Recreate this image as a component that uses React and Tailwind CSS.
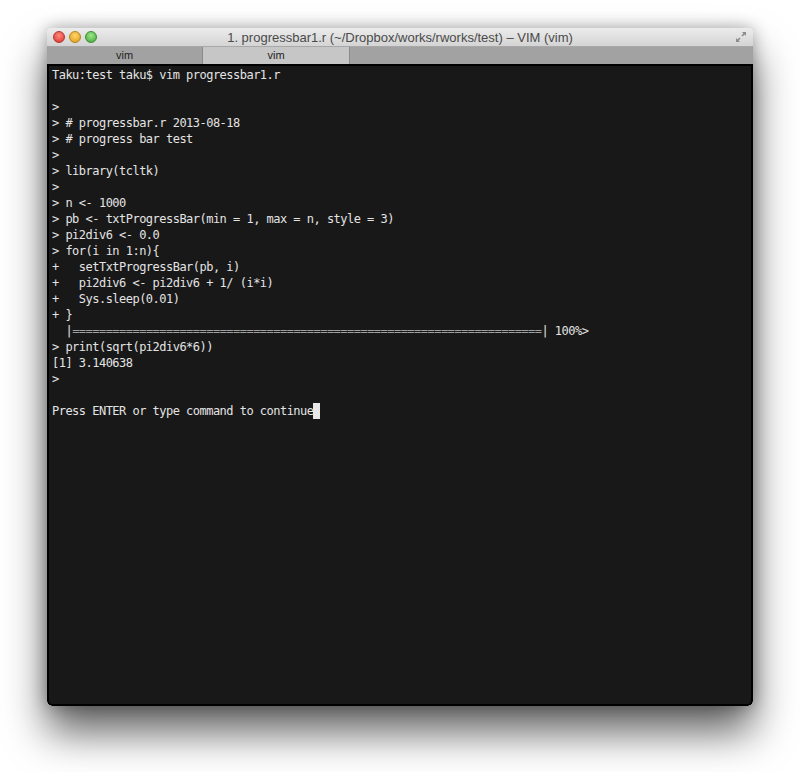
import React from "react";

const lines = [
  "Taku:test taku$ vim progressbar1.r",
  "",
  ">",
  "> # progressbar.r 2013-08-18",
  "> # progress bar test",
  ">",
  "> library(tcltk)",
  ">",
  "> n <- 1000",
  "> pb <- txtProgressBar(min = 1, max = n, style = 3)",
  "> pi2div6 <- 0.0",
  "> for(i in 1:n){",
  "+   setTxtProgressBar(pb, i)",
  "+   pi2div6 <- pi2div6 + 1/ (i*i)",
  "+   Sys.sleep(0.01)",
  "+ }",
];

const after = ["> print(sqrt(pi2div6*6))", "[1] 3.140638", ">", ""];

const TrafficLight = ({ from, to, ring }) => (
  <span
    className="w-[12px] h-[12px] rounded-full border"
    style={{ background: `radial-gradient(circle at 50% 35%, ${from}, ${to})`, borderColor: ring }}
  />
);

const App = () => {
  return (
    <div className="w-[800px] h-[772px] bg-white pt-[28px] pl-[47px] overflow-hidden">
      <div className="w-[706px] h-[678px] flex flex-col rounded-[5px] overflow-hidden shadow-[0_26px_42px_rgba(0,0,0,0.62),0_0_16px_rgba(0,0,0,0.32)]">
        {/* title bar */}
        <div className="relative h-[19px] flex items-center bg-gradient-to-b from-[#ececec] to-[#d4d4d4] border-b border-[#a8a8a8]">
          <div className="flex items-center gap-[4px] pl-[6px]">
            <TrafficLight from="#ff8a80" to="#d9312a" ring="#b0352d" />
            <TrafficLight from="#ffd66b" to="#dc9a17" ring="#b78418" />
            <TrafficLight from="#9fe68a" to="#3fa53a" ring="#3a8d2f" />
          </div>
          <div className="flex-1 text-center text-[13px] text-[#4a4a4a] pr-[50px] font-['Liberation_Sans',sans-serif] leading-none">
            1. progressbar1.r (~/Dropbox/works/rworks/test) – VIM (vim)
          </div>
          <svg className="absolute right-[6px] top-[3px]" width="12" height="12" viewBox="0 0 12 12">
            <path d="M7 1h4v4l-1.4-1.4-2 2-1.2-1.2 2-2z" fill="#8c8c8c" />
            <path d="M5 11H1V7l1.4 1.4 2-2 1.2 1.2-2 2z" fill="#8c8c8c" />
          </svg>
        </div>
        {/* tabs */}
        <div className="h-[17px] flex bg-[#a2a2a2] text-[11px] text-[#222] font-['Liberation_Sans',sans-serif] leading-none">
          <div className="w-[156px] flex items-center justify-center border-r border-[#8a8a8a]">vim</div>
          <div className="w-[147px] flex items-center justify-center bg-[#c6c6c6] border-r border-[#8a8a8a]">vim</div>
          <div className="flex-1" />
        </div>
        {/* terminal */}
        <div className="flex-1 bg-[#181818] border-2 border-black rounded-b-[5px] pl-[3px] pt-[1px] font-['DejaVu_Sans_Mono',monospace] text-[12px] tracking-[-0.52px] leading-[16px] text-[#e4e4e4] whitespace-pre">
          {lines.map((l, i) => (
            <div key={i} className="h-[16px]">{l}</div>
          ))}
          <div className="h-[16px]">
            {"  |"}
            <span className="text-[#a0a0a0]">{"=".repeat(70)}</span>
            {"| 100%>"}
          </div>
          {after.map((l, i) => (
            <div key={i} className="h-[16px]">{l}</div>
          ))}
          <div className="h-[16px] flex">
            <span>Press ENTER or type command to continue</span>
            <span className="inline-block w-[7px] h-[16px] bg-[#e8e8e8]" />
          </div>
        </div>
      </div>
    </div>
  );
};

export default App;
